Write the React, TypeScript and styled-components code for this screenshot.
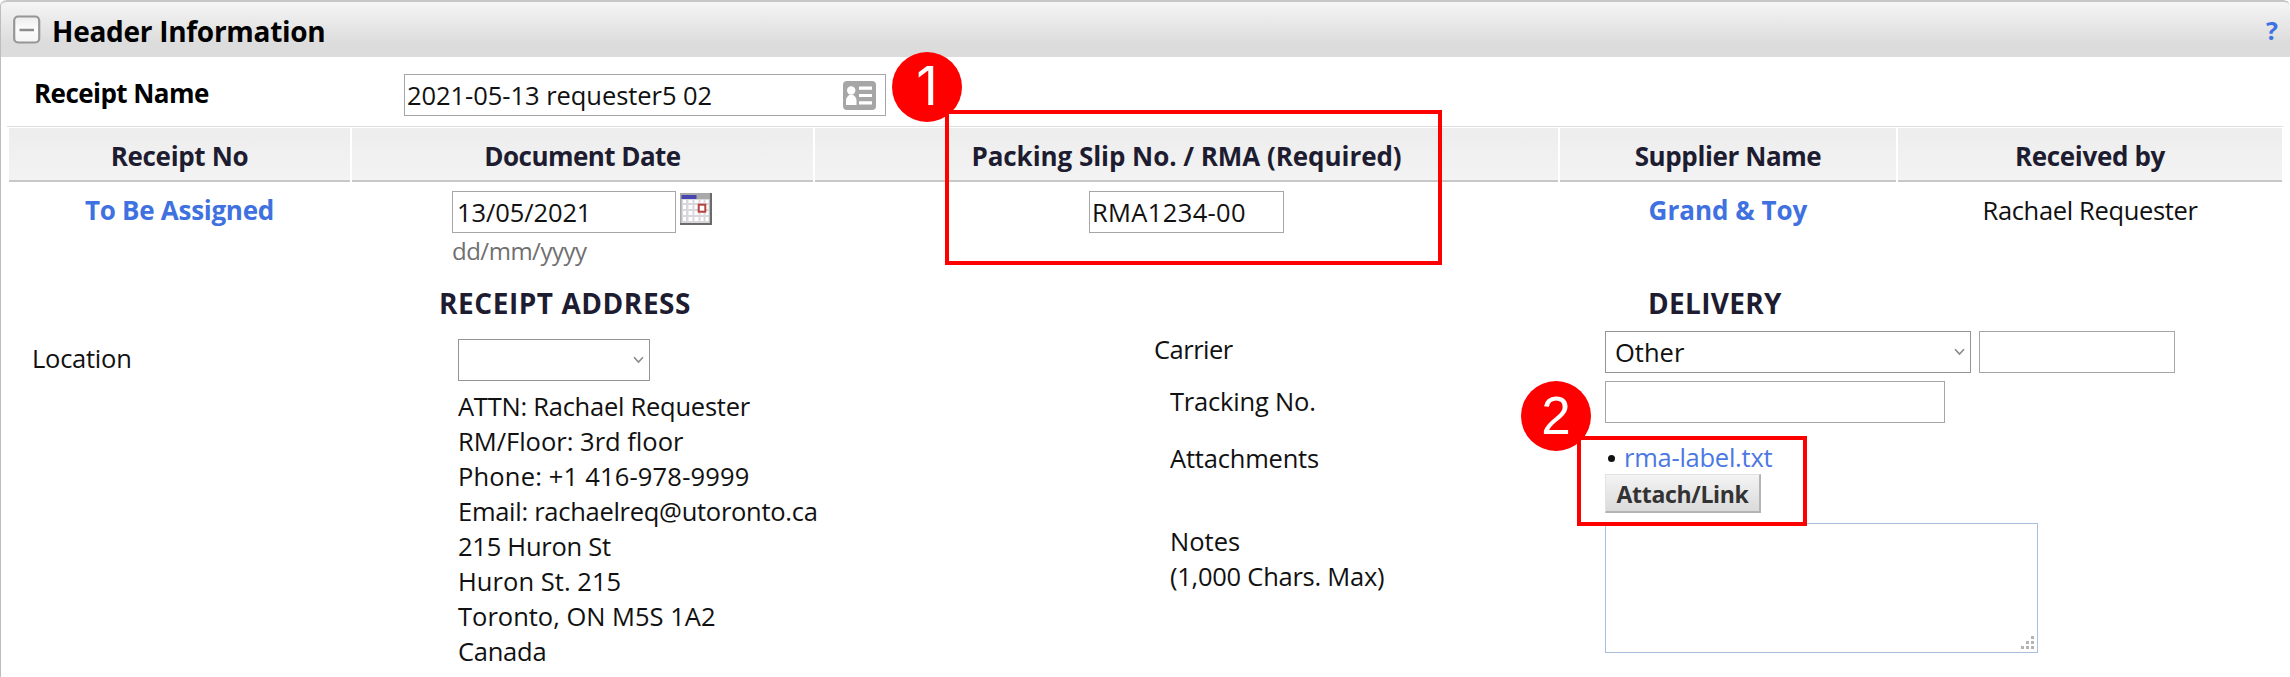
import React from "react";
import styled, { createGlobalStyle } from "styled-components";

const GlobalStyle = createGlobalStyle`
  *, *::before, *::after { box-sizing: border-box; }
  html, body { margin: 0; padding: 0; background: #fff; }
  body {
    font-family: "Open Sans", "Noto Sans", sans-serif;
    font-size: 25.5px;
    line-height: 35px;
    color: #111;
  }
`;

const Panel = styled.main`
  position: relative;
  width: 2290px;
  height: 677px;
  overflow: hidden;
  border-left: 1px solid #bdbdbd;
  border-top-left-radius: 6px;
  border-top-right-radius: 6px;
  background: #fff;
`;

const PanelHeader = styled.header`
  display: flex;
  align-items: center;
  height: 57px;
  padding: 0 12px 0 12px;
  border-top: 2px solid #c6c6c6;
  border-top-left-radius: 6px;
  border-top-right-radius: 6px;
  background: linear-gradient(#f5f5f5, #dcdcdc 75%, #dcdcdc);
`;

const PanelTitle = styled.h1`
  flex: 1;
  margin: 3px 0 0 11px;
  font-size: 28px;
  line-height: 35px;
  letter-spacing: -0.28px;
  color: #000;
`;

const HelpLink = styled.a`
  margin-top: 2px;
  font-size: 25px;
  font-weight: 700;
  color: #4071e0;
`;

const Text = styled.span<{ $track?: number }>`
  letter-spacing: ${(p) => p.$track ?? 0}px;
  white-space: nowrap;
`;

const NameRow = styled.section`
  display: grid;
  grid-template-columns: 370px 482px;
  align-items: start;
  height: 69px;
  padding: 17px 0 0 33px;
`;

const NameLabel = styled.label`
  padding-top: 2px;
  font-size: 26px;
  font-weight: 700;
  letter-spacing: -0.55px;
  color: #000;
`;

const Field = styled.div<{ $w: number; $pad?: number; $dark?: boolean }>`
  display: flex;
  align-items: center;
  justify-content: space-between;
  flex: none;
  width: ${(p) => p.$w}px;
  height: 42px;
  padding: 0 ${(p) => p.$pad ?? 3}px;
  border: 1px solid ${(p) => (p.$dark ? "#949494" : "#a6a6a6")};
  background: #fff;
`;

const SelectField = styled(Field)`
  padding: 0 5px 0 9px;
`;

const CardSlot = styled.span`
  display: flex;
  margin-right: 7px;
`;

const Grid = styled.section`
  display: grid;
  grid-template-columns: 341px 461px 743px 336px 384px;
  column-gap: 2px;
  margin: 0 7px 0 6px;
  padding: 1px 0 0 2px;
  border-top: 1px solid #dedede;
`;

const HeadCell = styled.div<{ $track?: number }>`
  height: 54px;
  padding-top: 11px;
  border-bottom: 2px solid #c8c8c8;
  background: linear-gradient(#ededed, #f3f3f3);
  text-align: center;
  font-size: 26px;
  font-weight: 700;
  letter-spacing: ${(p) => p.$track ?? 0}px;
  color: #1e1c30;
`;

const Cell = styled.div`
  height: 103px;
  padding-top: 11px;
  text-align: center;
`;

const StrongLink = styled.a<{ $track?: number }>`
  font-size: 26px;
  font-weight: 700;
  letter-spacing: ${(p) => p.$track ?? 0}px;
  color: #4071e0;
`;

const DateCell = styled(Cell)`
  padding: 9px 0 0 100px;
  text-align: left;
`;

const DateLine = styled.div`
  display: flex;
  align-items: center;
  height: 42px;
  gap: 4px;

  svg {
    margin-bottom: 6px;
  }
`;

const DateHint = styled.div`
  font-size: 24px;
  letter-spacing: -0.5px;
  line-height: 35px;
  color: #707070;
`;

const SlipCell = styled(Cell)`
  display: flex;
  justify-content: center;
  align-items: flex-start;
  padding-top: 9px;
`;

const Details = styled.section`
  display: grid;
  grid-template-columns: 1153px 1fr;
`;

const SectionTitle = styled.h2<{ $indent: number; $track: number; $h: number }>`
  margin: 0;
  padding-left: ${(p) => p.$indent}px;
  height: ${(p) => p.$h}px;
  font-size: 28px;
  line-height: 37px;
  letter-spacing: ${(p) => p.$track}px;
  color: #1e1c30;
`;

const AddressBody = styled.div`
  display: grid;
  grid-template-columns: 426px 1fr;
  padding-left: 31px;
`;

const LocationLabel = styled.div`
  padding-top: 2px;
  letter-spacing: -0.25px;
`;

const AddressLines = styled.address`
  display: flex;
  flex-direction: column;
  padding-top: 8px;
  font-style: normal;
`;

const DeliveryRow = styled.div<{ $h: number; $indent?: number }>`
  display: grid;
  grid-template-columns: ${(p) => 451 - (p.$indent ?? 0)}px 1fr;
  align-items: start;
  height: ${(p) => p.$h}px;
  padding-left: ${(p) => p.$indent ?? 0}px;
`;

const DeliveryLabel = styled.div<{ $top: number }>`
  display: flex;
  flex-direction: column;
  padding-top: ${(p) => p.$top}px;
`;

const FieldPair = styled.div`
  display: flex;
  gap: 8px;
`;

const Attachment = styled.div`
  display: flex;
  align-items: center;
  height: 35px;
  padding: 1px 0 0 3px;
`;

const Bullet = styled.i`
  width: 7px;
  height: 7px;
  margin: 3px 9px 0 0;
  border-radius: 50%;
  background: #111;
`;

const FileLink = styled.a`
  letter-spacing: -0.25px;
  color: #4b78e2;
`;

const AttachButton = styled.button`
  display: block;
  width: 156px;
  height: 39px;
  padding: 1px 0 0;
  border: 1px solid #e2e2e2;
  border-right: 2px solid #b4b4b4;
  border-bottom: 2px solid #b4b4b4;
  background: linear-gradient(#f4f4f4, #dadada);
  font: 700 23px/32px "Open Sans", sans-serif;
  letter-spacing: -0.33px;
  color: #333;
`;

const NotesBox = styled.div`
  display: flex;
  justify-content: flex-end;
  align-items: flex-end;
  width: 433px;
  height: 130px;
  padding: 3px;
  border: 1px solid #a9bfdc;
  background: #fff;
`;

const CalloutFrame = styled.div<{ $x: number; $y: number; $w: number; $h: number }>`
  position: absolute;
  left: ${(p) => p.$x}px;
  top: ${(p) => p.$y}px;
  width: ${(p) => p.$w}px;
  height: ${(p) => p.$h}px;
  border: 4px solid #fe0000;
`;

const CalloutBadge = styled.div<{ $x: number; $y: number; $font: string }>`
  position: absolute;
  left: ${(p) => p.$x}px;
  top: ${(p) => p.$y}px;
  width: 70px;
  height: 70px;
  border-radius: 50%;
  background: #fe0000;
  color: #fff;
  text-align: center;
  font: 53px/69px ${(p) => p.$font}, sans-serif;
`;

const CollapseIcon = () => (
  <svg width="28" height="29" viewBox="0 0 28 29" fill="none">
    <defs>
      <linearGradient id="collapse-fill" x1="0" y1="0" x2="0" y2="1">
        <stop offset="0" stopColor="#ececec" />
        <stop offset="0.5" stopColor="#fcfcfc" />
        <stop offset="1" stopColor="#f4f4f4" />
      </linearGradient>
    </defs>
    <rect x="1.2" y="1.5" width="25" height="26" rx="4" fill="url(#collapse-fill)" stroke="#969696" strokeWidth="2.2" />
    <path d="M6.500 15H21" stroke="#8c8c8c" strokeWidth="2.600" />
  </svg>
);

const ContactCardIcon = () => (
  <svg width="33" height="29" viewBox="0 0 33 29">
    <rect width="33" height="29" rx="4" fill="#a6a6a6" />
    <circle cx="8.2" cy="9.500" r="4.2" fill="#fff" />
    <path d="M3 24v-4.500c0-3 2-5 3.400-5.600h3.600c1.600.6 3.500 2.600 3.500 5.600V24z" fill="#fff" />
    <path d="M16 7.200h13M16 14.500h13M16 21.800h13" stroke="#fff" strokeWidth="3.200" />
  </svg>
);

const CalendarIcon = () => (
  <svg width="32" height="32" viewBox="0 0 32 32">
    <rect width="32" height="32" fill="#6a6a6a" />
    <rect x="0" y="0" width="30" height="30" fill="#a9a9a9" />
    <rect x="1.500" y="6" width="28" height="24" fill="#d9d6dc" />
    <rect x="1.500" y="2" width="15" height="4" fill="#4646ae" />
    <path
      d="M3 7h3v3H3zM8.500 7h4v3h-4zM14.500 7h4v3h-4zM20.500 7h3v3h-3zM25.500 7h3v3h-3zM3 12h3v4H3zM8.500 12h4v4h-4zM14.500 12h4v4h-4zM25.500 12h3v4h-3zM3 18h3v4H3zM8.500 18h4v4h-4zM14.500 18h4v4h-4zM20.500 20h3v2h-3zM25.500 18h3v4h-3zM3 24h3v4H3zM8.500 24h4v4h-4zM14.500 24h4v4h-4zM20.500 24h3v4h-3zM25.500 24h3v4h-3z"
      fill="#fff"
    />
    <rect x="18.700" y="11.700" width="6.600" height="7" fill="#fff" stroke="#b5443f" strokeWidth="2" />
  </svg>
);

const Chevron = () => (
  <svg width="11" height="8" viewBox="0 0 11 8" fill="none">
    <path d="M1 1.200l4.500 4.800L10 1.200" stroke="#8a8a8a" strokeWidth="1.600" />
  </svg>
);

const ResizeGrip = () => (
  <svg width="13" height="13" viewBox="0 0 13 13" fill="#b4b4b4">
    <path d="M10 0h3v3h-3zM5 5h3v3H5zM10 5h3v3h-3zM0 10h3v3H0zM5 10h3v3H5zM10 10h3v3h-3z" />
  </svg>
);

const address: [string, number][] = [
  ["ATTN: Rachael Requester", -0.25],
  ["RM/Floor: 3rd floor", 0],
  ["Phone: +1 416-978-9999", 0.18],
  ["Email: rachaelreq@utoronto.ca", -0.28],
  ["215 Huron St", -0.25],
  ["Huron St. 215", 0.05],
  ["Toronto, ON M5S 1A2", 0],
  ["Canada", -0.25],
];

export default function App() {
  return (
    <>
      <GlobalStyle />
      <Panel>
        <PanelHeader>
          <CollapseIcon />
          <PanelTitle>Header Information</PanelTitle>
          <HelpLink>?</HelpLink>
        </PanelHeader>

        <NameRow>
          <NameLabel>Receipt Name</NameLabel>
          <Field $w={482} $pad={2}>
            <Text $track={-0.05}>2021-05-13 requester5 02</Text>
            <CardSlot>
              <ContactCardIcon />
            </CardSlot>
          </Field>
        </NameRow>

        <Grid>
          <HeadCell $track={-0.35}>Receipt No</HeadCell>
          <HeadCell $track={-0.55}>Document Date</HeadCell>
          <HeadCell $track={-0.05}>Packing Slip No. / RMA (Required)</HeadCell>
          <HeadCell $track={-0.4}>Supplier Name</HeadCell>
          <HeadCell $track={-0.35}>Received by</HeadCell>
          <Cell>
            <StrongLink $track={-0.28}>To Be Assigned</StrongLink>
          </Cell>
          <DateCell>
            <DateLine>
              <Field $w={224} $pad={4}>
                <Text $track={-0.1}>13/05/2021</Text>
              </Field>
              <CalendarIcon />
            </DateLine>
            <DateHint>dd/mm/yyyy</DateHint>
          </DateCell>
          <SlipCell>
            <Field $w={195} $pad={2}>
              <Text $track={0.35}>RMA1234-00</Text>
            </Field>
          </SlipCell>
          <Cell>
            <StrongLink>Grand &amp; Toy</StrongLink>
          </Cell>
          <Cell>
            <Text $track={-0.35}>Rachael Requester</Text>
          </Cell>
        </Grid>

        <Details>
          <div>
            <SectionTitle $indent={438} $track={0.55} $h={54}>
              RECEIPT ADDRESS
            </SectionTitle>
            <AddressBody>
              <LocationLabel>Location</LocationLabel>
              <div>
                <SelectField $w={192} $dark>
                  <span />
                  <Chevron />
                </SelectField>
                <AddressLines>
                  {address.map(([line, track]) => (
                    <Text key={line} $track={track}>
                      {line}
                    </Text>
                  ))}
                </AddressLines>
              </div>
            </AddressBody>
          </div>

          <div>
            <SectionTitle $indent={494} $track={0.3} $h={46}>
              DELIVERY
            </SectionTitle>
            <DeliveryRow $h={50}>
              <DeliveryLabel $top={1}>
                <Text $track={-0.5}>Carrier</Text>
              </DeliveryLabel>
              <FieldPair>
                <SelectField $w={366} $dark>
                  <Text>Other</Text>
                  <Chevron />
                </SelectField>
                <Field $w={196} />
              </FieldPair>
            </DeliveryRow>
            <DeliveryRow $h={58} $indent={16}>
              <DeliveryLabel $top={3}>
                <Text $track={-0.2}>Tracking No.</Text>
              </DeliveryLabel>
              <Field $w={340} />
            </DeliveryRow>
            <DeliveryRow $h={84} $indent={16}>
              <DeliveryLabel $top={2}>
                <Text $track={-0.2}>Attachments</Text>
              </DeliveryLabel>
              <div>
                <Attachment>
                  <Bullet />
                  <FileLink>rma-label.txt</FileLink>
                </Attachment>
                <AttachButton>Attach/Link</AttachButton>
              </div>
            </DeliveryRow>
            <DeliveryRow $h={130} $indent={16}>
              <DeliveryLabel $top={1}>
                <Text>Notes</Text>
                <Text $track={-0.25}>(1,000 Chars. Max)</Text>
              </DeliveryLabel>
              <NotesBox>
                <ResizeGrip />
              </NotesBox>
            </DeliveryRow>
          </div>
        </Details>

        <CalloutFrame $x={944} $y={110} $w={497} $h={155} />
        <CalloutBadge $x={891} $y={52} $font="Inter">1</CalloutBadge>
        <CalloutFrame $x={1576} $y={436} $w={230} $h={90} />
        <CalloutBadge $x={1520} $y={381} $font='"Liberation Sans"'>2</CalloutBadge>
      </Panel>
    </>
  );
}
